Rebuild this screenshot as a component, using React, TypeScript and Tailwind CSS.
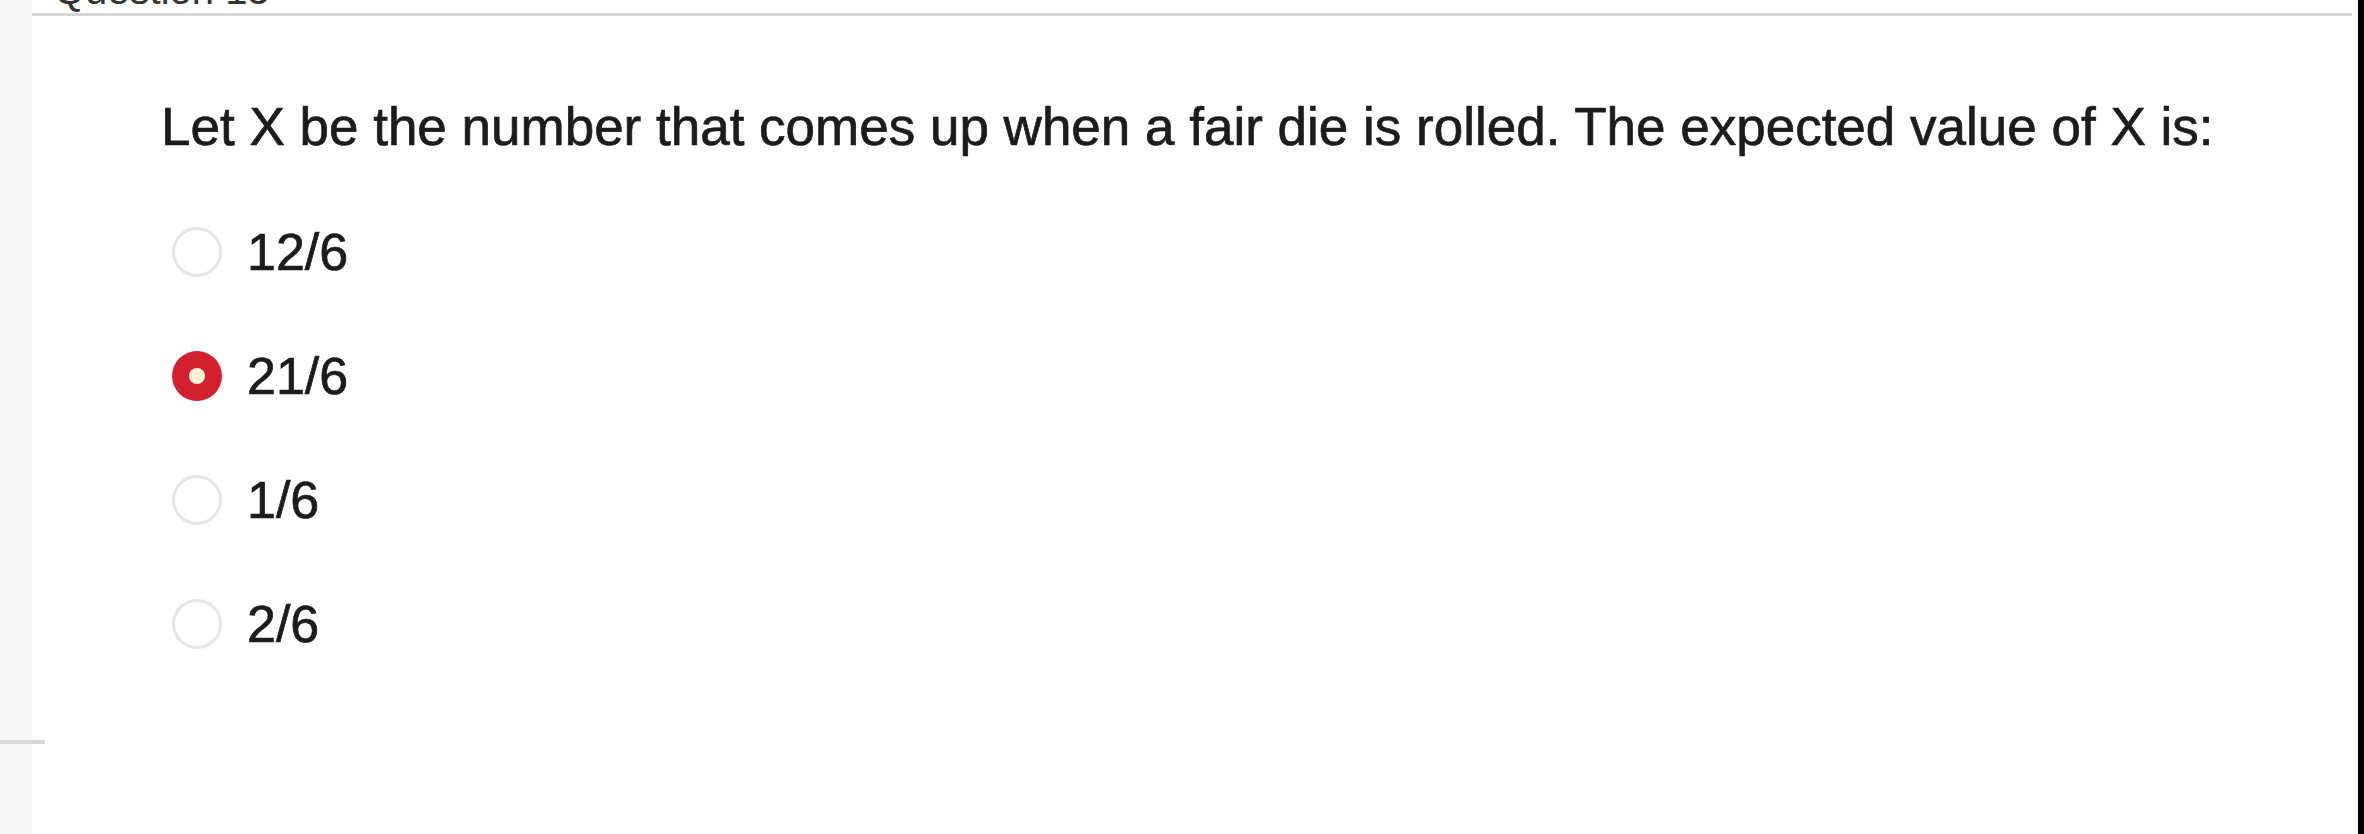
const options = [
  { label: '12/6', checked: false },
  { label: '21/6', checked: true },
  { label: '1/6', checked: false },
  { label: '2/6', checked: false },
];

function Radio({ checked }: { checked: boolean }) {
  if (checked) {
    return (
      <span className="w-[50px] h-[50px] rounded-full bg-[#d3202f] flex items-center justify-center shrink-0">
        <span className="w-[16px] h-[16px] rounded-full bg-[#fdf3d8]" />
      </span>
    );
  }
  return <span className="w-[50px] h-[50px] rounded-full border-[3px] border-[#e6e6e6] bg-white shrink-0" />;
}

export default function App() {
  return (
    <div
      className="w-full h-[834px] bg-white flex overflow-hidden text-[#1c1c1c]"
      style={{ fontFamily: '"Liberation Sans", Arial, sans-serif' }}
    >
      {/* Left rail */}
      <div className="w-[32px] bg-[#f7f7f7] shrink-0 flex flex-col">
        <div className="h-[740px]" />
        <div className="w-[45px] h-[4px] bg-[#d8d8d8]" />
      </div>

      {/* Question panel */}
      <div className="flex-1 flex flex-col mr-[6px]">
        <div className="h-[16px] overflow-hidden border-b-[3px] border-[#d6d6d6] pl-[22px]">
          <div className="text-[40px] leading-[40px] mt-[-30px] text-[#333333] whitespace-nowrap">Question 15</div>
        </div>

        <div className="pl-[129px] pt-[79px]">
          <p className="text-[53px] leading-[64px] whitespace-nowrap [-webkit-text-stroke:0.7px_#1c1c1c]">
            Let X be the number that comes up when a fair die is rolled. The expected value of X is:
          </p>
        </div>

        <div className="pl-[140px] pt-[31px] flex flex-col">
          {options.map((o) => (
            <label key={o.label} className="h-[124px] flex items-center gap-[25px]">
              <Radio checked={o.checked} />
              <span className="text-[52px] leading-[52px] [-webkit-text-stroke:0.7px_#1c1c1c]">{o.label}</span>
            </label>
          ))}
        </div>
      </div>

      {/* Right edge */}
      <div className="w-[6px] bg-black shrink-0" />
    </div>
  );
}
